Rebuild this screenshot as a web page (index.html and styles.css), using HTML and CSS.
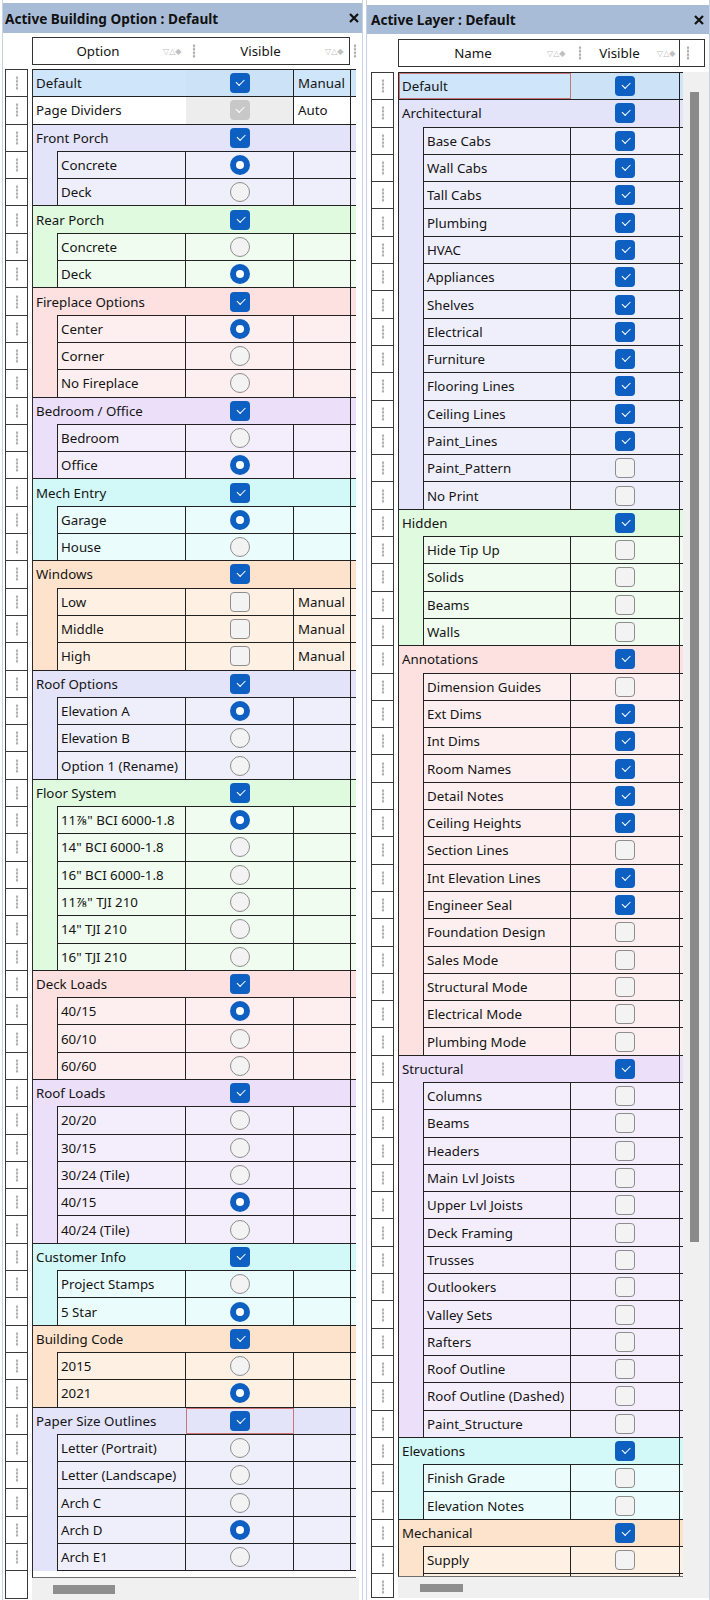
FILE: index.html
```html
<!DOCTYPE html>
<html>
<head>
<meta charset="utf-8">
<link rel="stylesheet" href="styles.css">
</head>
<body>
<section class="panel p-left">
  <div class="title"><span>Active Building Option : Default</span><svg class="close" viewBox="0 0 10 10"><path d="M1 1L9 9M9 1L1 9"/></svg></div>
  <div class="hdrow">
    <div class="hd">
      <div class="hc hc1"><span class="t">Option</span><span class="sort">▽△◆</span><span class="grip"></span></div>
      <div class="hc hc2"><span class="t">Visible</span><span class="sort">▽△◆</span></div>
    </div>
    <span class="grip gout"></span>
  </div>
  <div class="bodyrow">
    <div class="handles">
      <div class="hdl"></div><div class="hdl"></div><div class="hdl"></div><div class="hdl"></div><div class="hdl"></div>
      <div class="hdl"></div><div class="hdl"></div><div class="hdl"></div><div class="hdl"></div><div class="hdl"></div>
      <div class="hdl"></div><div class="hdl"></div><div class="hdl"></div><div class="hdl"></div><div class="hdl"></div>
      <div class="hdl"></div><div class="hdl"></div><div class="hdl"></div><div class="hdl"></div><div class="hdl"></div>
      <div class="hdl"></div><div class="hdl"></div><div class="hdl"></div><div class="hdl"></div><div class="hdl"></div>
      <div class="hdl"></div><div class="hdl"></div><div class="hdl"></div><div class="hdl"></div><div class="hdl"></div>
      <div class="hdl"></div><div class="hdl"></div><div class="hdl"></div><div class="hdl"></div><div class="hdl"></div>
      <div class="hdl"></div><div class="hdl"></div><div class="hdl"></div><div class="hdl"></div><div class="hdl"></div>
      <div class="hdl"></div><div class="hdl"></div><div class="hdl"></div><div class="hdl"></div><div class="hdl"></div>
      <div class="hdl"></div><div class="hdl"></div><div class="hdl"></div><div class="hdl"></div><div class="hdl"></div>
      <div class="hdl"></div><div class="hdl"></div><div class="hdl"></div><div class="hdl"></div><div class="hdl"></div>
      <div class="hdl empty"></div>
    </div>
    <div class="gw">
      <div class="vp">
        <div class="r top def"><div class="c nm">Default</div><div class="c vs"><i class="cb on"></i></div><div class="c ex">Manual</div><div class="c cl"></div></div>
        <div class="r top pd"><div class="c nm">Page Dividers</div><div class="c vs"><i class="cb dis"></i></div><div class="c ex">Auto</div><div class="c cl"></div></div>

        <div class="r grp lav"><div class="c nm">Front Porch</div><div class="c vs"><i class="cb on"></i></div><div class="c ex"></div><div class="c cl"></div></div>
        <div class="r ch lav"><div class="ind"></div><div class="c nm">Concrete</div><div class="c vs"><i class="rb on"></i></div><div class="c ex"></div><div class="c cl"></div></div>
        <div class="r ch lav"><div class="ind"></div><div class="c nm">Deck</div><div class="c vs"><i class="rb"></i></div><div class="c ex"></div><div class="c cl"></div></div>

        <div class="r grp grn"><div class="c nm">Rear Porch</div><div class="c vs"><i class="cb on"></i></div><div class="c ex"></div><div class="c cl"></div></div>
        <div class="r ch grn"><div class="ind"></div><div class="c nm">Concrete</div><div class="c vs"><i class="rb"></i></div><div class="c ex"></div><div class="c cl"></div></div>
        <div class="r ch grn"><div class="ind"></div><div class="c nm">Deck</div><div class="c vs"><i class="rb on"></i></div><div class="c ex"></div><div class="c cl"></div></div>

        <div class="r grp pnk"><div class="c nm">Fireplace Options</div><div class="c vs"><i class="cb on"></i></div><div class="c ex"></div><div class="c cl"></div></div>
        <div class="r ch pnk"><div class="ind"></div><div class="c nm">Center</div><div class="c vs"><i class="rb on"></i></div><div class="c ex"></div><div class="c cl"></div></div>
        <div class="r ch pnk"><div class="ind"></div><div class="c nm">Corner</div><div class="c vs"><i class="rb"></i></div><div class="c ex"></div><div class="c cl"></div></div>
        <div class="r ch pnk"><div class="ind"></div><div class="c nm">No Fireplace</div><div class="c vs"><i class="rb"></i></div><div class="c ex"></div><div class="c cl"></div></div>

        <div class="r grp pur"><div class="c nm">Bedroom / Office</div><div class="c vs"><i class="cb on"></i></div><div class="c ex"></div><div class="c cl"></div></div>
        <div class="r ch pur"><div class="ind"></div><div class="c nm">Bedroom</div><div class="c vs"><i class="rb"></i></div><div class="c ex"></div><div class="c cl"></div></div>
        <div class="r ch pur"><div class="ind"></div><div class="c nm">Office</div><div class="c vs"><i class="rb on"></i></div><div class="c ex"></div><div class="c cl"></div></div>

        <div class="r grp cyn"><div class="c nm">Mech Entry</div><div class="c vs"><i class="cb on"></i></div><div class="c ex"></div><div class="c cl"></div></div>
        <div class="r ch cyn"><div class="ind"></div><div class="c nm">Garage</div><div class="c vs"><i class="rb on"></i></div><div class="c ex"></div><div class="c cl"></div></div>
        <div class="r ch cyn"><div class="ind"></div><div class="c nm">House</div><div class="c vs"><i class="rb"></i></div><div class="c ex"></div><div class="c cl"></div></div>

        <div class="r grp pch"><div class="c nm">Windows</div><div class="c vs"><i class="cb on"></i></div><div class="c ex"></div><div class="c cl"></div></div>
        <div class="r ch pch"><div class="ind"></div><div class="c nm">Low</div><div class="c vs"><i class="cb"></i></div><div class="c ex">Manual</div><div class="c cl"></div></div>
        <div class="r ch pch"><div class="ind"></div><div class="c nm">Middle</div><div class="c vs"><i class="cb"></i></div><div class="c ex">Manual</div><div class="c cl"></div></div>
        <div class="r ch pch"><div class="ind"></div><div class="c nm">High</div><div class="c vs"><i class="cb"></i></div><div class="c ex">Manual</div><div class="c cl"></div></div>

        <div class="r grp lav"><div class="c nm">Roof Options</div><div class="c vs"><i class="cb on"></i></div><div class="c ex"></div><div class="c cl"></div></div>
        <div class="r ch lav"><div class="ind"></div><div class="c nm">Elevation A</div><div class="c vs"><i class="rb on"></i></div><div class="c ex"></div><div class="c cl"></div></div>
        <div class="r ch lav"><div class="ind"></div><div class="c nm">Elevation B</div><div class="c vs"><i class="rb"></i></div><div class="c ex"></div><div class="c cl"></div></div>
        <div class="r ch lav"><div class="ind"></div><div class="c nm">Option 1 (Rename)</div><div class="c vs"><i class="rb"></i></div><div class="c ex"></div><div class="c cl"></div></div>

        <div class="r grp grn"><div class="c nm">Floor System</div><div class="c vs"><i class="cb on"></i></div><div class="c ex"></div><div class="c cl"></div></div>
        <div class="r ch grn"><div class="ind"></div><div class="c nm">11⅞" BCI 6000-1.8</div><div class="c vs"><i class="rb on"></i></div><div class="c ex"></div><div class="c cl"></div></div>
        <div class="r ch grn"><div class="ind"></div><div class="c nm">14" BCI 6000-1.8</div><div class="c vs"><i class="rb"></i></div><div class="c ex"></div><div class="c cl"></div></div>
        <div class="r ch grn"><div class="ind"></div><div class="c nm">16" BCI 6000-1.8</div><div class="c vs"><i class="rb"></i></div><div class="c ex"></div><div class="c cl"></div></div>
        <div class="r ch grn"><div class="ind"></div><div class="c nm">11⅞" TJI 210</div><div class="c vs"><i class="rb"></i></div><div class="c ex"></div><div class="c cl"></div></div>
        <div class="r ch grn"><div class="ind"></div><div class="c nm">14" TJI 210</div><div class="c vs"><i class="rb"></i></div><div class="c ex"></div><div class="c cl"></div></div>
        <div class="r ch grn"><div class="ind"></div><div class="c nm">16" TJI 210</div><div class="c vs"><i class="rb"></i></div><div class="c ex"></div><div class="c cl"></div></div>

        <div class="r grp pnk"><div class="c nm">Deck Loads</div><div class="c vs"><i class="cb on"></i></div><div class="c ex"></div><div class="c cl"></div></div>
        <div class="r ch pnk"><div class="ind"></div><div class="c nm">40/15</div><div class="c vs"><i class="rb on"></i></div><div class="c ex"></div><div class="c cl"></div></div>
        <div class="r ch pnk"><div class="ind"></div><div class="c nm">60/10</div><div class="c vs"><i class="rb"></i></div><div class="c ex"></div><div class="c cl"></div></div>
        <div class="r ch pnk"><div class="ind"></div><div class="c nm">60/60</div><div class="c vs"><i class="rb"></i></div><div class="c ex"></div><div class="c cl"></div></div>

        <div class="r grp pur"><div class="c nm">Roof Loads</div><div class="c vs"><i class="cb on"></i></div><div class="c ex"></div><div class="c cl"></div></div>
        <div class="r ch pur"><div class="ind"></div><div class="c nm">20/20</div><div class="c vs"><i class="rb"></i></div><div class="c ex"></div><div class="c cl"></div></div>
        <div class="r ch pur"><div class="ind"></div><div class="c nm">30/15</div><div class="c vs"><i class="rb"></i></div><div class="c ex"></div><div class="c cl"></div></div>
        <div class="r ch pur"><div class="ind"></div><div class="c nm">30/24 (Tile)</div><div class="c vs"><i class="rb"></i></div><div class="c ex"></div><div class="c cl"></div></div>
        <div class="r ch pur"><div class="ind"></div><div class="c nm">40/15</div><div class="c vs"><i class="rb on"></i></div><div class="c ex"></div><div class="c cl"></div></div>
        <div class="r ch pur"><div class="ind"></div><div class="c nm">40/24 (Tile)</div><div class="c vs"><i class="rb"></i></div><div class="c ex"></div><div class="c cl"></div></div>

        <div class="r grp cyn"><div class="c nm">Customer Info</div><div class="c vs"><i class="cb on"></i></div><div class="c ex"></div><div class="c cl"></div></div>
        <div class="r ch cyn"><div class="ind"></div><div class="c nm">Project Stamps</div><div class="c vs"><i class="rb"></i></div><div class="c ex"></div><div class="c cl"></div></div>
        <div class="r ch cyn"><div class="ind"></div><div class="c nm">5 Star</div><div class="c vs"><i class="rb on"></i></div><div class="c ex"></div><div class="c cl"></div></div>

        <div class="r grp pch"><div class="c nm">Building Code</div><div class="c vs"><i class="cb on"></i></div><div class="c ex"></div><div class="c cl"></div></div>
        <div class="r ch pch"><div class="ind"></div><div class="c nm">2015</div><div class="c vs"><i class="rb"></i></div><div class="c ex"></div><div class="c cl"></div></div>
        <div class="r ch pch"><div class="ind"></div><div class="c nm">2021</div><div class="c vs"><i class="rb on"></i></div><div class="c ex"></div><div class="c cl"></div></div>

        <div class="r grp lav"><div class="c nm">Paper Size Outlines</div><div class="c vs sel"><i class="cb on"></i></div><div class="c ex"></div><div class="c cl"></div></div>
        <div class="r ch lav"><div class="ind"></div><div class="c nm">Letter (Portrait)</div><div class="c vs"><i class="rb"></i></div><div class="c ex"></div><div class="c cl"></div></div>
        <div class="r ch lav"><div class="ind"></div><div class="c nm">Letter (Landscape)</div><div class="c vs"><i class="rb"></i></div><div class="c ex"></div><div class="c cl"></div></div>
        <div class="r ch lav"><div class="ind"></div><div class="c nm">Arch C</div><div class="c vs"><i class="rb"></i></div><div class="c ex"></div><div class="c cl"></div></div>
        <div class="r ch lav"><div class="ind"></div><div class="c nm">Arch D</div><div class="c vs"><i class="rb on"></i></div><div class="c ex"></div><div class="c cl"></div></div>
        <div class="r ch lav last"><div class="ind"></div><div class="c nm">Arch E1</div><div class="c vs"><i class="rb"></i></div><div class="c ex"></div><div class="c cl"></div></div>
      </div>
      <div class="hs"><div class="thumb"></div></div>
    </div>
  </div>
</section>

<section class="panel p-right">
  <div class="title"><span>Active Layer : Default</span><svg class="close" viewBox="0 0 10 10"><path d="M1 1L9 9M9 1L1 9"/></svg></div>
  <div class="hdrow">
    <div class="hd">
      <div class="hc hc1"><span class="t">Name</span><span class="sort">▽△◆</span><span class="grip"></span></div>
      <div class="hc hc2"><span class="t">Visible</span><span class="sort">▽△◆</span></div>
      <div class="hc hc3"><span class="grip"></span></div>
    </div>
  </div>
  <div class="bodyrow">
    <div class="handles">
      <div class="hdl"></div><div class="hdl"></div><div class="hdl"></div><div class="hdl"></div><div class="hdl"></div>
      <div class="hdl"></div><div class="hdl"></div><div class="hdl"></div><div class="hdl"></div><div class="hdl"></div>
      <div class="hdl"></div><div class="hdl"></div><div class="hdl"></div><div class="hdl"></div><div class="hdl"></div>
      <div class="hdl"></div><div class="hdl"></div><div class="hdl"></div><div class="hdl"></div><div class="hdl"></div>
      <div class="hdl"></div><div class="hdl"></div><div class="hdl"></div><div class="hdl"></div><div class="hdl"></div>
      <div class="hdl"></div><div class="hdl"></div><div class="hdl"></div><div class="hdl"></div><div class="hdl"></div>
      <div class="hdl"></div><div class="hdl"></div><div class="hdl"></div><div class="hdl"></div><div class="hdl"></div>
      <div class="hdl"></div><div class="hdl"></div><div class="hdl"></div><div class="hdl"></div><div class="hdl"></div>
      <div class="hdl"></div><div class="hdl"></div><div class="hdl"></div><div class="hdl"></div><div class="hdl"></div>
      <div class="hdl"></div><div class="hdl"></div><div class="hdl"></div><div class="hdl"></div><div class="hdl"></div>
      <div class="hdl"></div><div class="hdl"></div><div class="hdl"></div><div class="hdl"></div><div class="hdl"></div>
      <div class="hdl"></div>
    </div>
    <div class="gw">
      <div class="vrow">
        <div class="vp">
          <div class="r top def"><div class="c nm sel">Default</div><div class="c vs"><i class="cb on"></i></div><div class="c ex"></div></div>

          <div class="r grp lav"><div class="c nm">Architectural</div><div class="c vs"><i class="cb on"></i></div><div class="c ex"></div></div>
          <div class="r ch lav"><div class="ind"></div><div class="c nm">Base Cabs</div><div class="c vs"><i class="cb on"></i></div><div class="c ex"></div></div>
          <div class="r ch lav"><div class="ind"></div><div class="c nm">Wall Cabs</div><div class="c vs"><i class="cb on"></i></div><div class="c ex"></div></div>
          <div class="r ch lav"><div class="ind"></div><div class="c nm">Tall Cabs</div><div class="c vs"><i class="cb on"></i></div><div class="c ex"></div></div>
          <div class="r ch lav"><div class="ind"></div><div class="c nm">Plumbing</div><div class="c vs"><i class="cb on"></i></div><div class="c ex"></div></div>
          <div class="r ch lav"><div class="ind"></div><div class="c nm">HVAC</div><div class="c vs"><i class="cb on"></i></div><div class="c ex"></div></div>
          <div class="r ch lav"><div class="ind"></div><div class="c nm">Appliances</div><div class="c vs"><i class="cb on"></i></div><div class="c ex"></div></div>
          <div class="r ch lav"><div class="ind"></div><div class="c nm">Shelves</div><div class="c vs"><i class="cb on"></i></div><div class="c ex"></div></div>
          <div class="r ch lav"><div class="ind"></div><div class="c nm">Electrical</div><div class="c vs"><i class="cb on"></i></div><div class="c ex"></div></div>
          <div class="r ch lav"><div class="ind"></div><div class="c nm">Furniture</div><div class="c vs"><i class="cb on"></i></div><div class="c ex"></div></div>
          <div class="r ch lav"><div class="ind"></div><div class="c nm">Flooring Lines</div><div class="c vs"><i class="cb on"></i></div><div class="c ex"></div></div>
          <div class="r ch lav"><div class="ind"></div><div class="c nm">Ceiling Lines</div><div class="c vs"><i class="cb on"></i></div><div class="c ex"></div></div>
          <div class="r ch lav"><div class="ind"></div><div class="c nm">Paint_Lines</div><div class="c vs"><i class="cb on"></i></div><div class="c ex"></div></div>
          <div class="r ch lav"><div class="ind"></div><div class="c nm">Paint_Pattern</div><div class="c vs"><i class="cb"></i></div><div class="c ex"></div></div>
          <div class="r ch lav"><div class="ind"></div><div class="c nm">No Print</div><div class="c vs"><i class="cb"></i></div><div class="c ex"></div></div>

          <div class="r grp grn"><div class="c nm">Hidden</div><div class="c vs"><i class="cb on"></i></div><div class="c ex"></div></div>
          <div class="r ch grn"><div class="ind"></div><div class="c nm">Hide Tip Up</div><div class="c vs"><i class="cb"></i></div><div class="c ex"></div></div>
          <div class="r ch grn"><div class="ind"></div><div class="c nm">Solids</div><div class="c vs"><i class="cb"></i></div><div class="c ex"></div></div>
          <div class="r ch grn"><div class="ind"></div><div class="c nm">Beams</div><div class="c vs"><i class="cb"></i></div><div class="c ex"></div></div>
          <div class="r ch grn"><div class="ind"></div><div class="c nm">Walls</div><div class="c vs"><i class="cb"></i></div><div class="c ex"></div></div>

          <div class="r grp pnk"><div class="c nm">Annotations</div><div class="c vs"><i class="cb on"></i></div><div class="c ex"></div></div>
          <div class="r ch pnk"><div class="ind"></div><div class="c nm">Dimension Guides</div><div class="c vs"><i class="cb"></i></div><div class="c ex"></div></div>
          <div class="r ch pnk"><div class="ind"></div><div class="c nm">Ext Dims</div><div class="c vs"><i class="cb on"></i></div><div class="c ex"></div></div>
          <div class="r ch pnk"><div class="ind"></div><div class="c nm">Int Dims</div><div class="c vs"><i class="cb on"></i></div><div class="c ex"></div></div>
          <div class="r ch pnk"><div class="ind"></div><div class="c nm">Room Names</div><div class="c vs"><i class="cb on"></i></div><div class="c ex"></div></div>
          <div class="r ch pnk"><div class="ind"></div><div class="c nm">Detail Notes</div><div class="c vs"><i class="cb on"></i></div><div class="c ex"></div></div>
          <div class="r ch pnk"><div class="ind"></div><div class="c nm">Ceiling Heights</div><div class="c vs"><i class="cb on"></i></div><div class="c ex"></div></div>
          <div class="r ch pnk"><div class="ind"></div><div class="c nm">Section Lines</div><div class="c vs"><i class="cb"></i></div><div class="c ex"></div></div>
          <div class="r ch pnk"><div class="ind"></div><div class="c nm">Int Elevation Lines</div><div class="c vs"><i class="cb on"></i></div><div class="c ex"></div></div>
          <div class="r ch pnk"><div class="ind"></div><div class="c nm">Engineer Seal</div><div class="c vs"><i class="cb on"></i></div><div class="c ex"></div></div>
          <div class="r ch pnk"><div class="ind"></div><div class="c nm">Foundation Design</div><div class="c vs"><i class="cb"></i></div><div class="c ex"></div></div>
          <div class="r ch pnk"><div class="ind"></div><div class="c nm">Sales Mode</div><div class="c vs"><i class="cb"></i></div><div class="c ex"></div></div>
          <div class="r ch pnk"><div class="ind"></div><div class="c nm">Structural Mode</div><div class="c vs"><i class="cb"></i></div><div class="c ex"></div></div>
          <div class="r ch pnk"><div class="ind"></div><div class="c nm">Electrical Mode</div><div class="c vs"><i class="cb"></i></div><div class="c ex"></div></div>
          <div class="r ch pnk"><div class="ind"></div><div class="c nm">Plumbing Mode</div><div class="c vs"><i class="cb"></i></div><div class="c ex"></div></div>

          <div class="r grp pur"><div class="c nm">Structural</div><div class="c vs"><i class="cb on"></i></div><div class="c ex"></div></div>
          <div class="r ch pur"><div class="ind"></div><div class="c nm">Columns</div><div class="c vs"><i class="cb"></i></div><div class="c ex"></div></div>
          <div class="r ch pur"><div class="ind"></div><div class="c nm">Beams</div><div class="c vs"><i class="cb"></i></div><div class="c ex"></div></div>
          <div class="r ch pur"><div class="ind"></div><div class="c nm">Headers</div><div class="c vs"><i class="cb"></i></div><div class="c ex"></div></div>
          <div class="r ch pur"><div class="ind"></div><div class="c nm">Main Lvl Joists</div><div class="c vs"><i class="cb"></i></div><div class="c ex"></div></div>
          <div class="r ch pur"><div class="ind"></div><div class="c nm">Upper Lvl Joists</div><div class="c vs"><i class="cb"></i></div><div class="c ex"></div></div>
          <div class="r ch pur"><div class="ind"></div><div class="c nm">Deck Framing</div><div class="c vs"><i class="cb"></i></div><div class="c ex"></div></div>
          <div class="r ch pur"><div class="ind"></div><div class="c nm">Trusses</div><div class="c vs"><i class="cb"></i></div><div class="c ex"></div></div>
          <div class="r ch pur"><div class="ind"></div><div class="c nm">Outlookers</div><div class="c vs"><i class="cb"></i></div><div class="c ex"></div></div>
          <div class="r ch pur"><div class="ind"></div><div class="c nm">Valley Sets</div><div class="c vs"><i class="cb"></i></div><div class="c ex"></div></div>
          <div class="r ch pur"><div class="ind"></div><div class="c nm">Rafters</div><div class="c vs"><i class="cb"></i></div><div class="c ex"></div></div>
          <div class="r ch pur"><div class="ind"></div><div class="c nm">Roof Outline</div><div class="c vs"><i class="cb"></i></div><div class="c ex"></div></div>
          <div class="r ch pur"><div class="ind"></div><div class="c nm">Roof Outline (Dashed)</div><div class="c vs"><i class="cb"></i></div><div class="c ex"></div></div>
          <div class="r ch pur"><div class="ind"></div><div class="c nm">Paint_Structure</div><div class="c vs"><i class="cb"></i></div><div class="c ex"></div></div>

          <div class="r grp cyn"><div class="c nm">Elevations</div><div class="c vs"><i class="cb on"></i></div><div class="c ex"></div></div>
          <div class="r ch cyn"><div class="ind"></div><div class="c nm">Finish Grade</div><div class="c vs"><i class="cb"></i></div><div class="c ex"></div></div>
          <div class="r ch cyn"><div class="ind"></div><div class="c nm">Elevation Notes</div><div class="c vs"><i class="cb"></i></div><div class="c ex"></div></div>

          <div class="r grp pch"><div class="c nm">Mechanical</div><div class="c vs"><i class="cb on"></i></div><div class="c ex"></div></div>
          <div class="r ch pch"><div class="ind"></div><div class="c nm">Supply</div><div class="c vs"><i class="cb"></i></div><div class="c ex"></div></div>
          <div class="r ch pch"><div class="ind"></div><div class="c nm"></div><div class="c vs"><i class="cb"></i></div><div class="c ex"></div></div>
        </div>
        <div class="vs-bar"><div class="vthumb"></div></div>
      </div>
      <div class="hs"><div class="thumb"></div></div>
    </div>
  </div>
</section>
</body>
</html>
```

FILE: styles.css
```css
* { box-sizing: border-box; }
html, body { margin: 0; padding: 0; }
body {
  width: 710px;
  height: 1600px;
  overflow: hidden;
  background: #ffffff;
  display: flex;
  align-items: flex-start;
  font-family: "Noto Sans", "Open Sans", sans-serif;
  font-size: 13.3px;
  color: #141414;
}

.panel {
  display: flex;
  flex-direction: column;
  height: 1600px;
  background: #ffffff;
  border-left: 1px solid #c5d3e4;
  border-right: 1px solid #c5d3e4;
}
.p-left { margin-left: 2px; width: 361px; padding-top: 3px; }
.p-right { margin-left: 3px; width: 344px; padding-top: 5px; }

.title {
  display: flex;
  align-items: center;
  justify-content: space-between;
  background: #a8bcd7;
  font-weight: 700;
  font-size: 13.6px;
  color: #111;
  flex: none;
}
.p-left .title { height: 30px; padding: 0 3px 0 2px; }
.p-right .title { height: 29px; padding: 0 5px 0 4px; }
.close { width: 10px; height: 10px; }
.close path { stroke: #111; stroke-width: 2.2; fill: none; }

/* header */
.hdrow { display: flex; align-items: center; flex: none; }
.p-left .hdrow { margin-top: 4px; padding-left: 29px; }
.p-right .hdrow { margin-top: 5px; padding-left: 31px; }
.hd {
  display: flex;
  height: 28px;
  border: 1px solid #333;
  background: #fff;
}
.p-left .hd { width: 318px; }
.p-right .hd { width: 307px; }
.hc { display: flex; align-items: center; height: 100%; }
.hc .t { flex: 1; text-align: center; }
.sort {
  font-family: "DejaVu Sans", sans-serif;
  font-size: 8px;
  color: #c0c0c0;
  width: 22px;
  white-space: nowrap;
}
.grip {
  width: 4px;
  height: 14px;
  flex: none;
  background: radial-gradient(circle, #adadad 1.1px, transparent 1.6px) 0 0 / 4px 3.5px repeat-y;
}
.p-left .hc1 { width: 163px; }
.p-left .hc1 .grip { margin-left: 7px; }
.p-left .hc2 { flex: 1; }
.p-left .hc2 .sort { margin-right: 2px; }
.gout { margin-left: 3px; }
.p-right .hc1 { width: 183px; }
.p-right .hc1 .grip { margin-left: 9px; }
.p-right .hc2 { width: 98px; border-right: 1px solid #333; }
.p-right .hc3 { flex: 1; padding-left: 6px; }

/* body */
.bodyrow { display: flex; align-items: flex-start; flex: none; }
.p-left .bodyrow { margin-top: 4px; }
.p-right .bodyrow { margin-top: 5px; }

.handles {
  width: 23px;
  border: 1px solid #3a3a3a;
  border-top: 0;
  overflow: hidden;
  background: #fff;
  display: flex;
  flex-direction: column;
  flex: none;
}
.p-left .handles { margin-left: 2px; height: 1530px; }
.p-right .handles { margin-left: 4px; height: 1526px; }
.hdl {
  height: 27.3px;
  flex: none;
  border-top: 1px solid #3a3a3a;
  display: flex;
  align-items: center;
  justify-content: center;
}
.hdl::before {
  content: "";
  width: 4px;
  height: 14px;
  background: radial-gradient(circle, #adadad 1.1px, transparent 1.6px) 0 0 / 4px 3.5px repeat-y;
}
.hdl.empty { flex: 1; }
.hdl.empty::before { display: none; }

.gw { display: flex; flex-direction: column; margin-left: 4px; }
.p-left .gw { width: 327px; height: 1531px; }
.p-right .gw { width: 311px; height: 1526px; }

.vp {
  border-left: 1px solid #2a2a2a;
  border-bottom: 1px solid #6f6f6f;
  overflow: hidden;
  background: #fff;
  flex: none;
}
.p-left .vp { width: 324px; height: 1509px; }
.p-right .vp { width: 285px; height: 1505px; }
.vrow { display: flex; flex: none; }
.vs-bar { width: 26px; height: 1505px; background: #f0f0f0; padding: 20px 0 0 7px; }
.vthumb { width: 9px; height: 1150px; background: #8a8a8a; }

.hs { flex: 1; background: #f0f0f0; }
.thumb { background: #8e8e8e; }
.p-left .thumb { margin: 7px 0 0 21px; width: 62px; height: 9px; }
.p-right .thumb { margin: 7px 0 0 22px; width: 43px; height: 8px; }

/* rows */
.r { display: grid; height: 27.3px; }
.p-left .r { grid-template-columns: 24px 129px 108px 57px 40px; width: 358px; }
.p-right .r { grid-template-columns: 24px 148px 109px 3px; width: 284px; }

.c {
  display: flex;
  align-items: center;
  min-width: 0;
  white-space: nowrap;
  overflow: hidden;
}
.nm { padding-left: 3px; }
.vs { justify-content: center; }
.ex { padding-left: 4px; }

.top, .grp { border-top: 1px solid #222; }
.top .nm, .grp .nm { grid-column: span 2; }
.top .vs { border-right: 1px solid #222; }
.top .ex, .grp .ex { border-right: 1px solid #222; }
.p-right .grp .vs { border-right: 1px solid #222; }

.ch .c { border-top: 1px solid #222; }
.ch .nm { border-left: 1px solid #222; border-right: 1px solid #222; }
.ch .vs { border-right: 1px solid #222; }
.ch .ex { border-right: 1px solid #222; }
.ch.last { height: 28.3px; }
.ch.last .c { border-bottom: 1px solid #222; }

.lav { --g: #e3e3fa; --c: #efeffc; }
.grn { --g: #dffadf; --c: #effcef; }
.pnk { --g: #fde1e1; --c: #fdefef; }
.pur { --g: #ebdff9; --c: #f4eefc; }
.cyn { --g: #d3f8f8; --c: #ebfcfc; }
.pch { --g: #fde3cb; --c: #fef0e3; }
.grp, .ch { background: var(--g); }
.ch .c { background: var(--c); }

.def { background: #cfe5f9; }
.def .vs { background: #cce2f6; }
.pd { background: #ffffff; }
.pd .vs { background: #ededed; }
.sel { box-shadow: inset 0 0 0 1px #cf7474; }

/* controls */
.cb, .rb {
  display: block;
  width: 20px;
  height: 20px;
  background: #f3f3f3;
  border: 1.5px solid #8d8d8d;
  position: relative;
  flex: none;
}
.cb { border-radius: 4px; }
.rb { border-radius: 50%; }
.cb.on, .cb.dis, .rb.on { border: 0; background: #0d5fc2; }
.cb.dis { background: #c8c8c8; }
.cb.on::after, .cb.dis::after {
  content: "";
  position: absolute;
  left: 6.5px;
  top: 6px;
  width: 7px;
  height: 3.5px;
  border-left: 1.3px solid #fff;
  border-bottom: 1.3px solid #fff;
  transform: rotate(-45deg);
}
.rb.on::after {
  content: "";
  position: absolute;
  left: 6px;
  top: 6px;
  width: 8px;
  height: 8px;
  border-radius: 50%;
  background: #fff;
}
```
